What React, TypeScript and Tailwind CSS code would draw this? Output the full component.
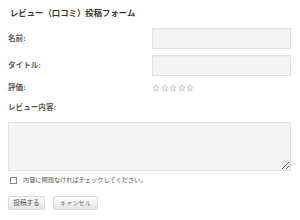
import React from 'react';

function Star() {
    return (
        <svg width="8" height="8" viewBox="0 0 24 24" className="shrink-0">
            <path
                d="M12 2.5l2.9 6.1 6.6.8-4.9 4.6 1.3 6.6L12 17.3l-5.9 3.3 1.3-6.6-4.9-4.6 6.6-.8z"
                fill="#eef1f5"
                stroke="#b8c2ce"
                strokeWidth="2.2"
                strokeLinejoin="round"
            />
        </svg>
    );
}

export default function App() {
    const font = "font-['Liberation_Serif','Noto_Sans_CJK_JP',serif]";
    return (
        <div className={`w-[300px] h-[220px] bg-white pl-[8px] pr-[9px] pt-[9px] ${font}`}>
            {/* Heading */}
            <h2 className="pl-[2px] text-[8.4px] leading-[10px] font-bold text-[#3a3a3a]">
                レビュー（口コミ）投稿フォーム
            </h2>

            {/* Name */}
            <div className="mt-[9px] flex h-[21px] items-center justify-between">
                <label className="text-[7.6px] leading-[10px] font-semibold text-[#5a5a5a]">名前:</label>
                <input
                    type="text"
                    className="h-[21px] w-[139px] border border-[#e2e2e2] bg-[#f5f5f5] shadow-[inset_0_1px_1px_rgba(0,0,0,0.04)] outline-none"
                />
            </div>

            {/* Title */}
            <div className="mt-[6px] flex h-[21px] items-center justify-between">
                <label className="text-[7.6px] leading-[10px] font-semibold text-[#5a5a5a]">タイトル:</label>
                <input
                    type="text"
                    className="h-[21px] w-[139px] border border-[#e2e2e2] bg-[#f5f5f5] shadow-[inset_0_1px_1px_rgba(0,0,0,0.04)] outline-none"
                />
            </div>

            {/* Rating */}
            <div className="mt-[8px] flex h-[8px] items-center justify-between">
                <label className="text-[7.6px] leading-[10px] font-semibold text-[#5a5a5a]">評価:</label>
                <div className="flex w-[139px] gap-[0.5px]">
                    <Star />
                    <Star />
                    <Star />
                    <Star />
                    <Star />
                </div>
            </div>

            {/* Review body */}
            <div className="mt-[11px] text-[7.6px] leading-[10px] font-semibold text-[#5a5a5a]">レビュー内容:</div>
            <textarea className="mt-[9px] block h-[49px] w-full border border-[#e2e2e2] bg-[#f5f5f5] outline-none" />

            {/* Confirm */}
            <div className="mt-[5px] flex h-[8px] items-center gap-[6px] pl-[2px]">
                <span className="h-[7px] w-[7px] border border-[#888] bg-white" />
                <span className="text-[6.2px] leading-[8px] text-[#555]">内容に問題なければチェックしてください。</span>
            </div>

            {/* Buttons */}
            <div className="mt-[12px] flex gap-[8px]">
                <button className="h-[14px] w-[37px] rounded-[2px] border border-[#dcdcdc] bg-gradient-to-b from-white to-[#e4e4e4] text-[6.6px] text-[#555]">
                    投稿する
                </button>
                <button className="h-[14px] w-[45px] rounded-[2px] border border-[#dcdcdc] bg-gradient-to-b from-white to-[#e4e4e4] text-[6.2px] text-[#777]">
                    キャンセル
                </button>
            </div>
        </div>
    );
}
